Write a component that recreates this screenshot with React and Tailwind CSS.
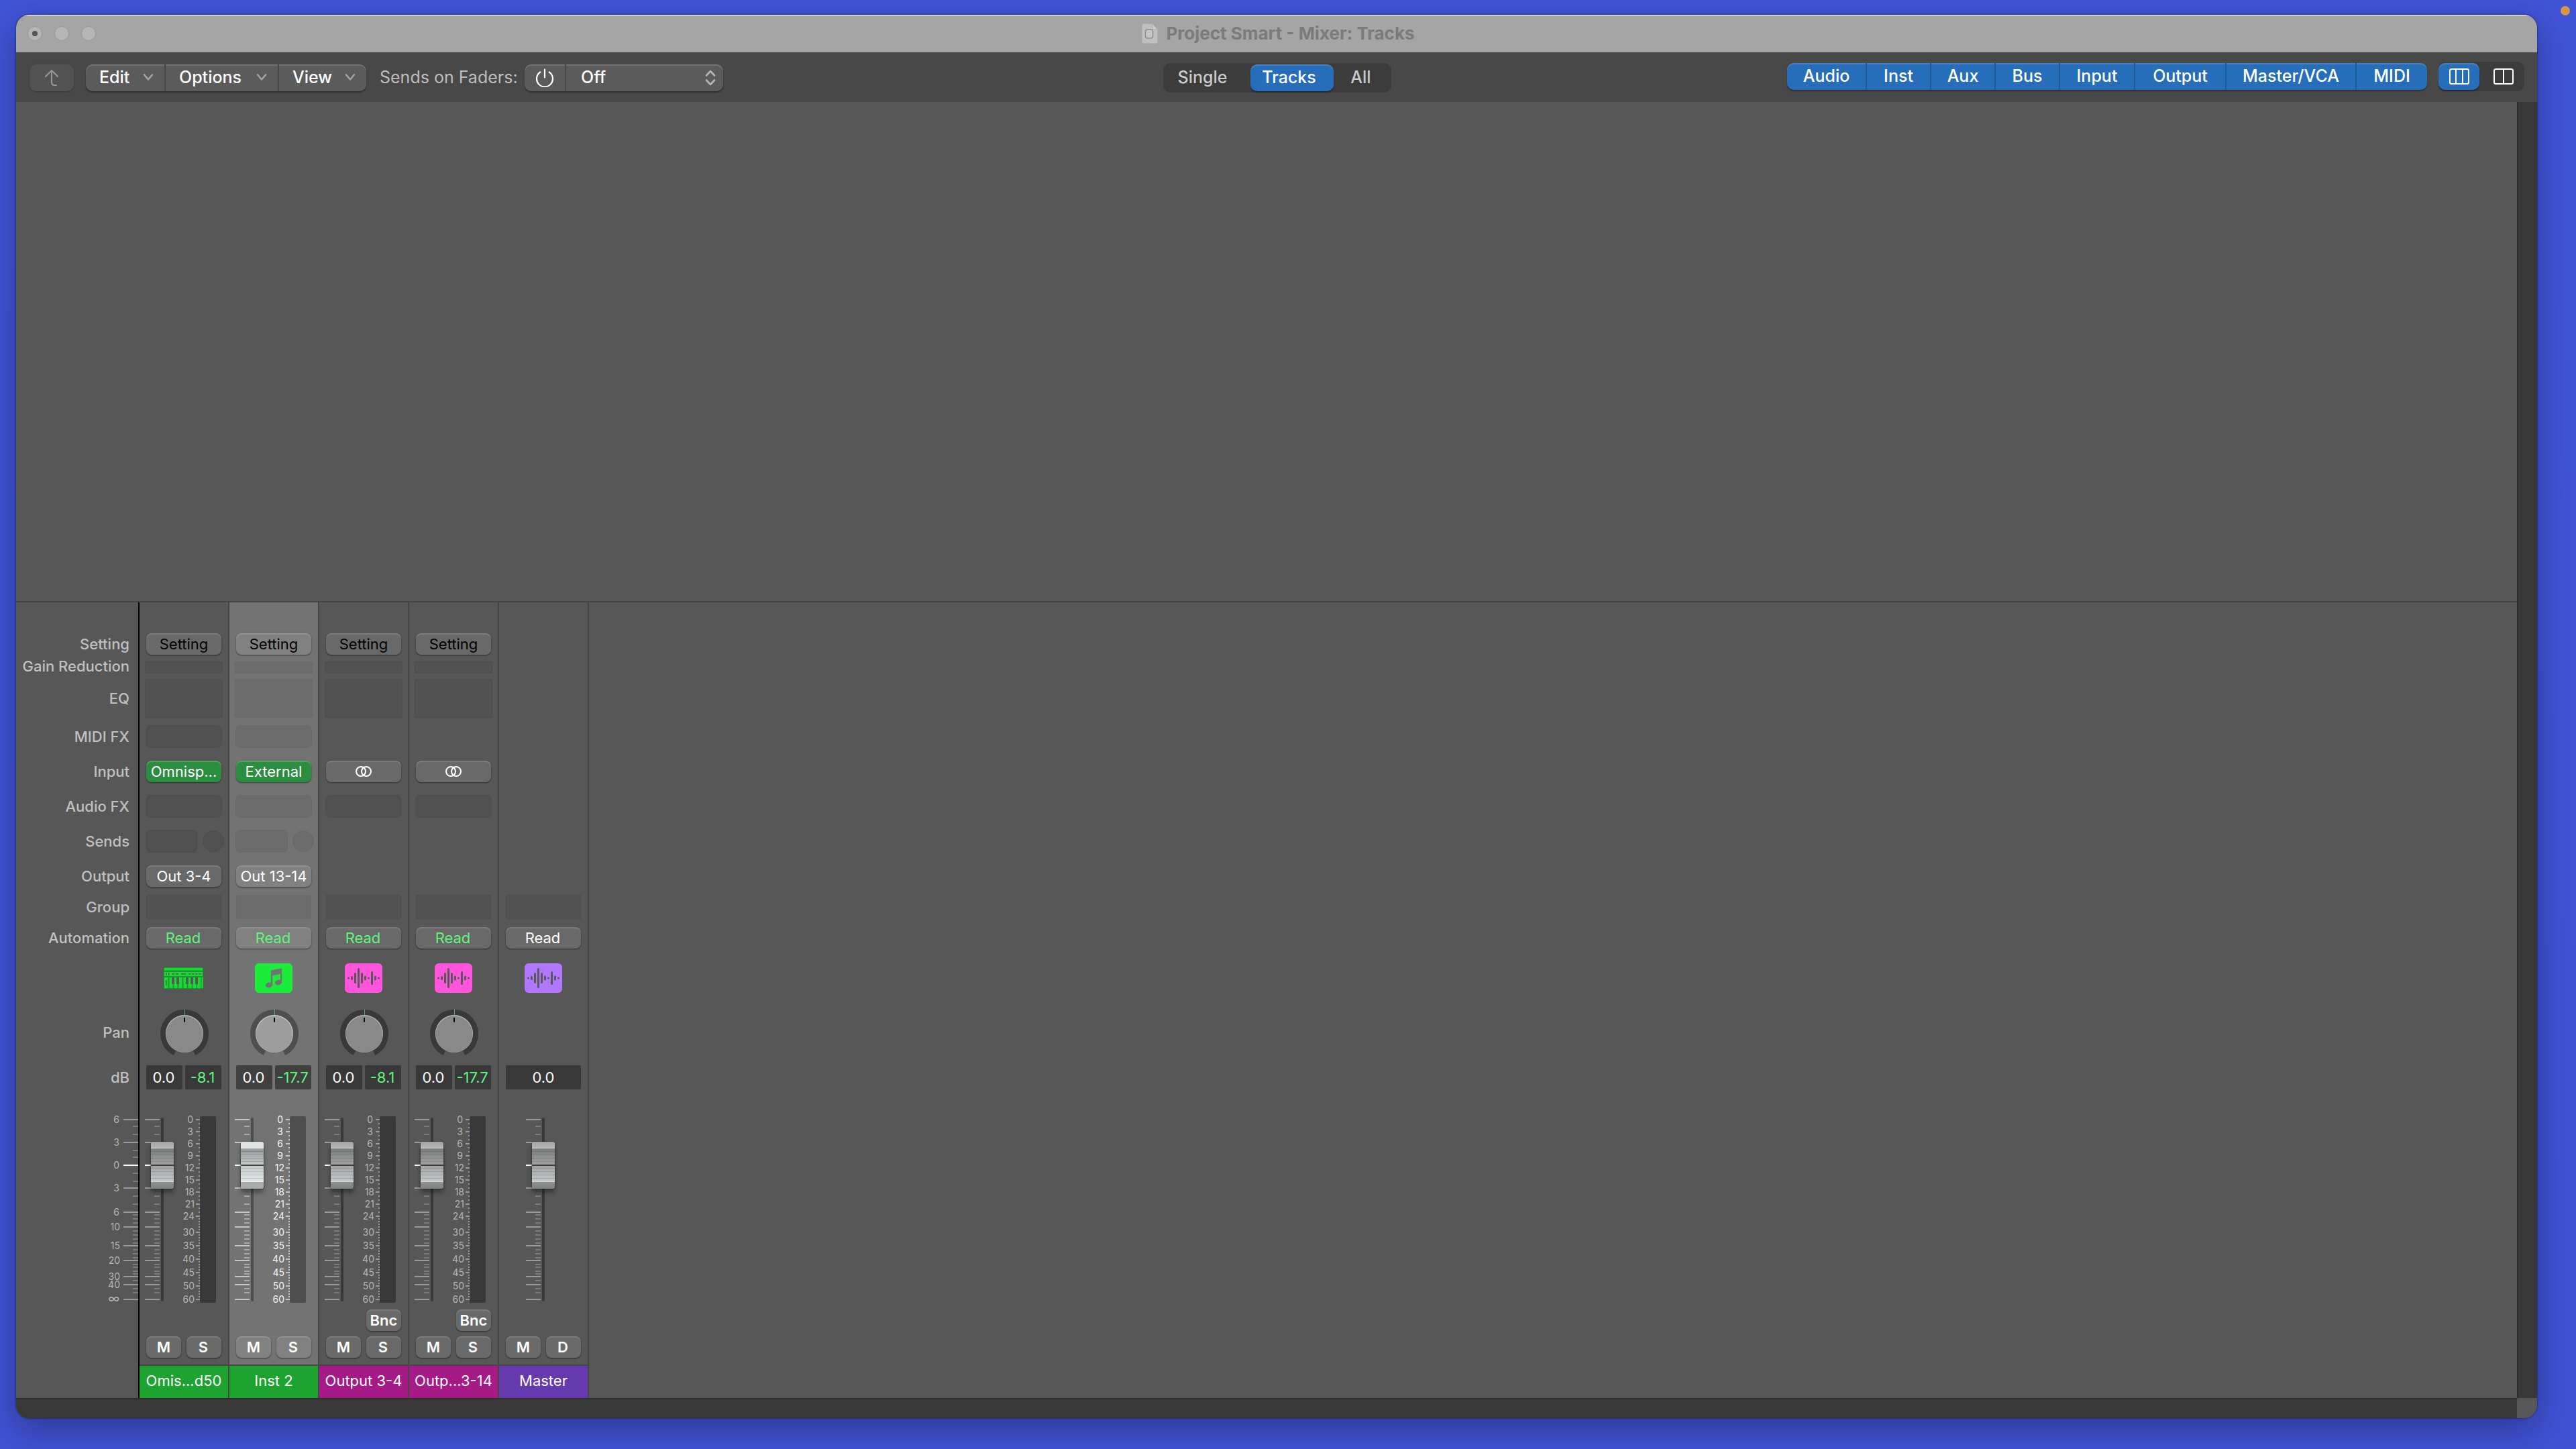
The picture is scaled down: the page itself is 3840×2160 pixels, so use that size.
import { clsx } from 'clsx';

const FILTERS = [
  { name: 'Audio', width: 'w-[119px]' },
  { name: 'Inst', width: 'w-[96px]' },
  { name: 'Aux', width: 'w-[96px]' },
  { name: 'Bus', width: 'w-[96px]' },
  { name: 'Input', width: 'w-[112px]' },
  { name: 'Output', width: 'w-[136px]' },
  { name: 'Master/VCA', width: 'w-[194px]' },
  { name: 'MIDI', width: 'w-[105px]' },
];

// one entry per row, shared by the label column and every strip
const ROW = {
  setting: 'h-[44px]',
  gain: 'h-[26px]',
  eq: 'h-[66px]',
  midi: 'h-[48px]',
  input: 'h-[56px]',
  fx: 'h-[48px]',
  sends: 'h-[56px]',
  output: 'h-[48px]',
  group: 'h-[44px]',
  auto: 'h-[48px]',
  icon: 'h-[72px]',
  pan: 'h-[94px]',
  db: 'h-[36px]',
};

const LABELS = [
  ['Setting', ROW.setting],
  ['Gain Reduction', ROW.gain, 'pb-1'],
  ['EQ', ROW.eq],
  ['MIDI FX', ROW.midi],
  ['Input', ROW.input],
  ['Audio FX', ROW.fx],
  ['Sends', ROW.sends],
  ['Output', ROW.output],
  ['Group', ROW.group],
  ['Automation', ROW.auto],
  ['', ROW.icon],
  ['Pan', ROW.pan, 'pb-1'],
  ['dB', ROW.db],
];

const STRIPS = [
  { id: 's1', name: 'Omis...d50', color: 'bg-[#1ea331]', inst: true, input: 'Omnisp...', output: 'Out 3-4', peak: '-8.1', icon: 'keys' },
  { id: 's2', name: 'Inst 2', color: 'bg-[#1ea331]', inst: true, input: 'External', output: 'Out 13-14', peak: '-17.7', icon: 'note', selected: true },
  { id: 's3', name: 'Output 3-4', color: 'bg-[#a51a86]', aux: true, peak: '-8.1', icon: 'wave', iconColor: 'bg-[#ff55dc]' },
  { id: 's4', name: 'Outp...3-14', color: 'bg-[#a51a86]', aux: true, peak: '-17.7', icon: 'wave', iconColor: 'bg-[#ff55dc]' },
  { id: 's5', name: 'Master', color: 'bg-[#6739ae]', master: true, icon: 'wave', iconColor: 'bg-[#b078ff]' },
];

// y positions are measured from the top of the 278px fader area
const MAJOR = [
  [5, '6'], [39, '3'], [73, '0'], [107, '3'], [143, '6'], [165, '10'], [193, '15'],
  [215, '20'], [239, '30'], [251, '40'], [273, '∞'],
];
const MINOR = [15, 27, 51, 61, 85, 97, 119, 131, 147, 153, 159, 171, 177, 183, 189, 199, 205, 211, 221, 225, 231, 235, 245, 257, 263];
const METER = [
  [5, 0], [23, 3], [41, 6], [59, 9], [77, 12], [95, 15], [113, 18], [131, 21], [149, 24],
  [173, 30], [193, 35], [213, 40], [233, 45], [253, 50], [273, 60],
];
const METER_MINOR = [
  ...Array.from({ length: 24 }, (_, i) => 5 + i * 6),
  ...Array.from({ length: 31 }, (_, i) => 149 + i * 4),
];

const Chevron = () => (
  <svg className="h-[12px] w-[16px]" viewBox="0 0 16 12" fill="none" stroke="#a3a3a3" strokeWidth="2.6" strokeLinecap="round" strokeLinejoin="round">
    <path d="M2 2.5 8 9.5 14 2.5" />
  </svg>
);

const raised = 'shadow-[0_2px_2px_rgba(0,0,0,0.35),inset_0_2px_1px_rgba(255,255,255,0.16)]';

const MenuButton = ({ children, className }) => (
  <button className={clsx('flex items-center justify-between border-r-2 border-[#484848] pr-4 pb-[2px] pl-5 last:border-r-0', className)}>
    {children}
    <Chevron />
  </button>
);

const TitleBar = () => (
  <header className="grid h-14 grid-cols-[1fr_auto_1fr] items-center border-t-2 border-[#cfcfcf] bg-[#a5a5a5] pb-[2px] pl-[17px]">
    <div className="flex gap-[18px]">
      <button aria-label="Close" className="flex size-[22px] items-center justify-center rounded-full border border-[#9b9b9b] bg-[#b6b6b6]">
        <span className="size-2 rounded-full bg-[#555]" />
      </button>
      <button aria-label="Minimize" className="size-[22px] rounded-full border border-[#9b9b9b] bg-[#b6b6b6]" />
      <button aria-label="Zoom" className="size-[22px] rounded-full border border-[#9b9b9b] bg-[#b6b6b6]" />
    </div>
    <div className="flex items-center gap-3 pr-3 text-[26px] leading-8 font-bold text-[#7b7b7b]">
      <svg className="h-[30px] w-[24px]" viewBox="0 0 24 30">
        <path d="M3 0.5h13l7.5 8.5v18a2.5 2.5 0 0 1-2.5 2.5H3A2.5 2.5 0 0 1 .5 27V3A2.5 2.5 0 0 1 3 .5z" fill="#c0c0c0" stroke="#b0b0b0" />
        <path d="M16 .5 23.5 9H18a2 2 0 0 1-2-2z" fill="#cdcdcd" stroke="#adadad" />
        <rect x="5.5" y="9" width="11" height="13" rx="3" fill="#c4c4c4" stroke="#8b8b8b" strokeWidth="1.5" />
        <circle cx="11" cy="15.5" r="4" fill="#b4b4b4" stroke="#d0d0d0" />
        <path d="M11 12v7M7.5 15.5h7M8.5 13l5 5M13.5 13l-5 5" stroke="#ddd" strokeWidth=".8" />
      </svg>
      <h1>Project Smart - Mixer: Tracks</h1>
    </div>
  </header>
);

const Toolbar = () => (
  <div className="grid h-[74px] grid-cols-[1fr_auto_1fr] items-center bg-[#484848] pr-[19px] pl-5 text-[25px] leading-8 font-medium text-white">
    <div className="flex items-center pt-[2px]">
      <button aria-label="Up" className="mr-[18px] flex h-10 w-[66px] items-center justify-center rounded-[10px] bg-[#525252] shadow-[0_1px_2px_rgba(0,0,0,0.25)]">
        <svg className="h-[26px] w-[22px]" viewBox="0 0 22 26" fill="none" stroke="#969696" strokeWidth="2.2" strokeLinecap="round" strokeLinejoin="round">
          <path d="M2 11 11 2l9 9M11 2v17.5q0 4.5 4.5 4.5H18" />
        </svg>
      </button>
      <div className={clsx('flex h-10 rounded-[10px] bg-[#5b5b5b]', raised)}>
        <MenuButton className="w-[119px]">Edit</MenuButton>
        <MenuButton className="w-[169px]">Options</MenuButton>
        <MenuButton className="w-[130px]">View</MenuButton>
      </div>
      <label htmlFor="sends-on-faders" className="w-[236px] pb-[2px] pl-5 font-normal whitespace-nowrap text-[#bdbdbd]">Sends on Faders:</label>
      <div className={clsx('flex h-10 rounded-[10px] bg-[#5b5b5b]', raised)}>
        <button aria-label="Sends on Faders" className="flex w-[62px] items-center justify-center border-r-2 border-[#484848]">
          <svg className="size-[28px]" viewBox="0 0 28 28" fill="none" stroke="#fff" strokeWidth="2.2" strokeLinecap="round">
            <path d="M14 1.5v12M7.3 5.5a12 12 0 1 0 13.4 0" />
          </svg>
        </button>
        <div className="relative flex">
          <select id="sends-on-faders" className="w-[234px] appearance-none bg-transparent pb-[2px] pl-[22px] outline-none">
            <option>Off</option>
          </select>
          <svg className="pointer-events-none absolute top-2 right-[11px] h-[24px] w-[16px]" viewBox="0 0 16 24" fill="none" stroke="#b5b5b5" strokeWidth="2.6" strokeLinecap="round" strokeLinejoin="round">
            <path d="M2 8.5 8 2l6 6.5M2 15.5 8 22l6-6.5" />
          </svg>
        </div>
      </div>
    </div>

    <div className="mt-[2px] flex h-11 items-center rounded-[11px] bg-[#3c3c3c] text-[#cacaca]">
      <button className="w-[130px] pr-3 pb-[2px]">Single</button>
      <button className={clsx('h-10 w-[124px] rounded-[10px] bg-[#266eb9] pr-2 pb-[2px] text-white', raised)}>Tracks</button>
      <button className="w-[86px] pr-1 pb-[2px]">All</button>
    </div>

    <div className="flex items-center justify-end gap-[17px] pb-[2px]">
      <div className={clsx('flex h-10 rounded-[10px] bg-[#266eb9]', raised)}>
        {FILTERS.map((f) => (
          <button key={f.name} className={clsx('border-r-2 border-[#1f5b9a] pb-[2px] last:border-r-0', f.width)}>{f.name}</button>
        ))}
      </div>
      <div className="flex h-11 items-center rounded-[11px] bg-[#3c3c3c]">
        <button aria-label="Narrow strips" className={clsx('flex h-10 w-[61px] items-center justify-center rounded-[10px] bg-[#266eb9]', raised)}>
          <svg className="h-[24px] w-[30px]" viewBox="0 0 30 24" fill="none" stroke="#fff" strokeWidth="2">
            <rect x="1" y="1" width="28" height="22" rx="2.5" />
            <path d="M10 1v22M20 1v22" />
          </svg>
        </button>
        <button aria-label="Wide strips" className="flex w-[67px] items-center justify-center pl-1">
          <svg className="h-[24px] w-[30px]" viewBox="0 0 30 24" fill="none" stroke="#fff" strokeWidth="2">
            <rect x="1" y="1" width="28" height="22" rx="2.5" />
            <path d="M15 1v22" />
          </svg>
        </button>
      </div>
    </div>
  </div>
);

const Row = ({ height, children }) => <div className={clsx('flex items-center justify-center', height)}>{children}</div>;

const StripButton = ({ selected, className, children, ...rest }) => (
  <button
    className={clsx(
      'flex h-8 items-center justify-center rounded-[8px] whitespace-nowrap shadow-[0_1px_2px_rgba(0,0,0,0.5),inset_0_2px_1px_rgba(255,255,255,0.14)]',
      selected ? 'bg-[#818181]' : 'bg-[#696969]',
      className
    )}
    {...rest}
  >
    {children}
  </button>
);

const Slot = ({ selected, className }) => (
  <div className={clsx('border', selected ? 'border-[#696969] bg-[#6c6c6c]' : 'border-[#4e4e4e] bg-[#515151]', className)} />
);

const KeysIcon = () => (
  <svg className="h-[32px] w-[60px]" viewBox="0 0 60 32">
    <rect width="59" height="32" rx="1.5" fill="#149c28" />
    <path fill="#1cd837" d="M1 1h57v3.5H1zM1 7h57v6H1zM1 15h5.5v16H1zM56.5 15h2v16h-2z" />
    {[8.5, 15.5, 22.5, 29.5, 36.5, 43.5, 50].map((x) => (
      <rect key={x} x={x} y="15" width="5" height="16" fill="#1cd837" />
    ))}
    {[12, 19, 33, 40, 47].map((x) => (
      <rect key={x} x={x} y="15" width="4" height="10" fill="#575757" />
    ))}
    <path fill="#575757" d="M3 8h1.5v4H3zM7 8h1.5v4H7zM12 9h4v1.5h-4zM18 9h4v1.5h-4zM26 9h7v1.5h-7zM37 9h3.5v1.5H37zM42 9h3.5v1.5H42zM47 9h3.5v1.5H47zM52 9h4v1.5h-4zM3 19h1.5v8H3z" />
  </svg>
);

const NoteIcon = () => (
  <div className="flex h-11 w-14 items-center justify-center rounded-[6px] bg-[#1bec39]">
    <svg className="h-[30px] w-[26px]" viewBox="0 0 26 30" fill="#737373">
      <ellipse cx="6" cy="25.5" rx="5.2" ry="3.8" transform="rotate(-12 6 25.5)" />
      <ellipse cx="20" cy="21.5" rx="5.2" ry="3.8" transform="rotate(-12 20 21.5)" />
      <path d="M8.8 26V4.5Q8.8 3.5 10 3.2L24 .6Q25.2.5 25.2 1.5V22h-2.4V9L11.2 11.3V26z" />
    </svg>
  </div>
);

const BARS = [[4, 3], [9, 6], [14, 16], [19, 30], [24, 16], [29, 7], [34, 3], [39, 20], [44, 7], [49, 3]];

const WaveIcon = ({ color }) => (
  <div className={clsx('h-11 w-14 rounded-[6px]', color)}>
    <svg className="h-11 w-14" viewBox="0 0 56 44">
      {BARS.map(([x, h]) => (
        <rect key={x} x={x} y={22 - h / 2} width="3" height={h} rx="1.5" fill="#575757" />
      ))}
    </svg>
  </div>
);

const PanKnob = ({ name, selected }) => (
  <label className="relative ml-[2px] block size-[72px]">
    <svg className="size-[72px]" viewBox="0 0 72 72">
      <path d="M21.5 64.5A32 32 0 1 1 50.5 64.5" fill="none" stroke={selected ? '#4e4e4e' : '#393939'} strokeWidth="8" />
      <path d="M36.5 0v8" stroke="#59a86a" />
      <circle cx="36" cy="36" r="28" fill={selected ? '#c9c9c9' : '#b5b5b5'} />
      <circle cx="36" cy="36.7" r="27.3" fill={selected ? '#9d9d9d' : '#898989'} />
      <rect x="35" y="12" width="2" height="6.5" fill="#000" />
    </svg>
    <input type="range" min="-64" max="63" defaultValue="0" aria-label={`${name} pan`} className="absolute inset-0 m-0 size-full opacity-0" />
  </label>
);

const Fader = ({ name, selected, meter }) => {
  const line = selected ? '#c6c6c6' : '#999';
  const slot = selected ? '#4e4e4e' : '#393939';
  return (
    <div className={clsx('relative h-[278px]', meter ? 'w-[116px]' : 'w-[52px]')}>
      <svg className="h-full w-full overflow-visible" style={{ fontFamily: 'Inter, sans-serif' }}>
        {MAJOR.map(([y], i) => (
          <rect key={y} x="0" y={y - 1} width="22" height="2" fill={i === 2 ? '#fff' : line} />
        ))}
        {MINOR.map((y) => <rect key={y} x="14" y={y - 1} width="8" height="2" fill={selected ? '#a9a9a9' : '#7c7c7c'} />)}
        <rect x="24" y="2" width="4" height="274" rx="2" fill={slot} />
        {meter && METER.map(([y, db]) => (
          <g key={y}>
            <text x={db < 10 ? 72 : 74} y={y + 5} textAnchor="end" fontSize="14" fill={selected ? '#f4f4f4' : '#b5b5b5'}>{db}</text>
            <rect x="76" y={y - 1} width="6" height="2" fill={line} />
          </g>
        ))}
        {meter && METER_MINOR.map((y, i) => <rect key={i} x="80" y={y - 1} width="2" height="2" fill={line} />)}
        {meter && <rect x="82" y="0" width="24" height="278" rx="2" fill={slot} />}
      </svg>
      <input
        type="range"
        min="0"
        max="208"
        defaultValue="170"
        aria-label={`${name} volume`}
        className={clsx(
          'absolute top-0 left-[9px] m-0 h-[278px] w-[34px] appearance-none bg-transparent [direction:rtl] [writing-mode:vertical-lr]',
          '[&::-webkit-slider-thumb]:h-[70px] [&::-webkit-slider-thumb]:w-[34px] [&::-webkit-slider-thumb]:appearance-none [&::-webkit-slider-thumb]:rounded-[3px] [&::-webkit-slider-thumb]:shadow-[0_6px_6px_rgba(0,0,0,0.35),0_0_2px_rgba(0,0,0,0.5)]',
          selected
            ? '[&::-webkit-slider-thumb]:[background:linear-gradient(#444,#444)_0_34px/100%_2px_no-repeat,linear-gradient(#dfe3e3_0_9px,#f0f4f4_9px_10px,transparent_10px_59px,#eef2f2_59px_60px,#a9abab_60px),repeating-linear-gradient(transparent_0_4px,#00000022_4px_5px),linear-gradient(#959999_10px,#c9cccc_36px,#e2e7e9_60px)]'
            : '[&::-webkit-slider-thumb]:[background:linear-gradient(#3a3a3a,#3a3a3a)_0_34px/100%_2px_no-repeat,linear-gradient(#a3a5a5_0px,#b4b6b6_9px,#cfd2d2_9px_10px,transparent_10px_59px,#d3d8da_59px_60px,#909292_60px,#808282_70px),repeating-linear-gradient(transparent_0_4px,#00000022_4px_5px),linear-gradient(#7b7d7d_10px,#a6a6a6_36px,#c2c8ca_60px)]'
        )}
      />
    </div>
  );
};

const Strip = ({ strip }) => {
  const { name, selected, inst, aux, master } = strip;
  return (
    <section aria-label={name} className={clsx('w-[134px] border-r-2 border-[#464646] pt-10 text-center', selected ? 'bg-[#737373]' : 'bg-[#575757]')}>
      <Row height={ROW.setting}>
        {!master && <StripButton selected={selected} className="w-28 text-black">Setting</StripButton>}
      </Row>
      <Row height={ROW.gain}>{!master && <Slot selected={selected} className="h-[18px] w-[116px] rounded-[2px]" />}</Row>
      <Row height={ROW.eq}>{!master && <Slot selected={selected} className="h-[58px] w-[116px] rounded-[2px]" />}</Row>
      <Row height={ROW.midi}>{inst && <Slot selected={selected} className="h-[34px] w-[114px] rounded-[8px]" />}</Row>
      <Row height={ROW.input}>
        {inst && (
          <button className="h-8 w-28 rounded-[8px] bg-[#2a8d3f] text-white shadow-[0_1px_2px_rgba(0,0,0,0.5),inset_0_2px_1px_rgba(255,255,255,0.2)]">{strip.input}</button>
        )}
        {aux && (
          <StripButton className="w-28" aria-label="Stereo">
            <svg className="h-[16px] w-[26px]" viewBox="0 0 26 16" fill="none" stroke="#fff" strokeWidth="2">
              <circle cx="9" cy="8" r="7" />
              <circle cx="17" cy="8" r="7" />
            </svg>
          </StripButton>
        )}
      </Row>
      <Row height={ROW.fx}>{!master && <Slot selected={selected} className="h-[34px] w-[114px] rounded-[8px]" />}</Row>
      <Row height={ROW.sends}>
        {inst && (
          <div className="flex items-center gap-[7px] pl-[3px]">
            <Slot selected={selected} className="h-[34px] w-[78px] rounded-[8px]" />
            <Slot selected={selected} className="size-8 rounded-full" />
          </div>
        )}
      </Row>
      <Row height={ROW.output}>
        {inst && <StripButton selected={selected} className="w-28 text-white">{strip.output}</StripButton>}
      </Row>
      <Row height={ROW.group}><Slot selected={selected} className="h-9 w-28 rounded-[2px]" /></Row>
      <Row height={ROW.auto}>
        <StripButton selected={selected} className={clsx('w-28 pr-[2px]', master ? 'text-white' : 'text-[#62f57e]')}>Read</StripButton>
      </Row>
      <Row height={ROW.icon}>
        {strip.icon === 'keys' && <KeysIcon />}
        {strip.icon === 'note' && <NoteIcon />}
        {strip.icon === 'wave' && <WaveIcon color={strip.iconColor} />}
      </Row>
      <Row height={ROW.pan}>{!master && <PanKnob name={name} selected={selected} />}</Row>
      <div className="flex h-9 gap-1 px-[10px]">
        <input
          aria-label={`${name} level`}
          defaultValue="0.0"
          className={clsx('min-w-0 flex-1 rounded-[2px] text-center text-white', !master && 'pr-[2px]', selected ? 'bg-[#404040]' : 'bg-[#383838]')}
        />
        {!master && (
          <output className={clsx('flex min-w-0 flex-1 items-center justify-center rounded-[2px] pr-[2px] text-[#62f57e]', selected ? 'bg-[#404040]' : 'bg-[#383838]')}>{strip.peak}</output>
        )}
      </div>
      <div className="mt-10 flex justify-center">
        <Fader name={name} selected={selected} meter={!master} />
      </div>
      <div className="mt-[10px] grid grid-cols-2 gap-2 px-[10px] pb-[10px] text-white">
        <div className="col-start-2 h-8">
          {aux && <StripButton className="w-full font-semibold">Bnc</StripButton>}
        </div>
        <StripButton selected={selected} className="font-semibold">M</StripButton>
        <StripButton selected={selected} className="pr-[2px] font-semibold">{master ? 'D' : 'S'}</StripButton>
      </div>
      <h2 className={clsx('flex h-[50px] items-center justify-center border-t-2 border-[#464646] pb-1 whitespace-nowrap text-white', strip.color)}>{name}</h2>
    </section>
  );
};

const LabelColumn = () => (
  <div className="w-[184px] border-r-2 border-black pt-10 text-right text-[#c0c0c0]">
    {LABELS.map(([text, height, pad], i) => (
      <div key={i} className={clsx('flex items-center justify-end pr-[13px] font-medium', height, pad)}>{text}</div>
    ))}
    <svg className="mt-10 ml-auto h-[278px] w-[60px] overflow-visible" style={{ fontFamily: 'Inter, sans-serif' }}>
      {MAJOR.map(([y, text], i) => (
        <g key={y}>
          <text x={text.length > 1 ? 33 : 32} y={y + 5} textAnchor="end" fontSize={text === '∞' ? 18 : 14} fill="#b5b5b5">{text}</text>
          <rect x="38" y={y - 1} width="22" height="2" fill={i === 2 ? '#fff' : '#999'} />
        </g>
      ))}
      {MINOR.map((y) => <rect key={y} x="52" y={y - 1} width="8" height="2" fill="#7c7c7c" />)}
    </svg>
  </div>
);

export default function App() {
  return (
    <div className="relative flex min-h-screen bg-[linear-gradient(#4054d6,#3f52d3)] pt-[22px] pr-[58px] pb-[46px] pl-6 font-['Inter',sans-serif]">
      <span className="absolute top-[9px] right-[9px] size-[14px] rounded-full bg-[#dc9448]" />
      <main className="flex flex-1 flex-col overflow-hidden rounded-[20px] bg-[#575757] shadow-[0_16px_50px_rgba(0,0,0,0.3),0_0_3px_rgba(0,0,0,0.6)]">
        <TitleBar />
        <Toolbar />
        <div className="flex flex-1">
          <div className="flex flex-1 flex-col">
            <div className="flex-1" />
            <div className="flex border-t-2 border-[#464646] text-[22px] leading-7">
              <LabelColumn />
              {STRIPS.map((s) => <Strip key={s.id} strip={s} />)}
            </div>
          </div>
          <div className="w-[30px] border-l-2 border-[#2d2d2d] bg-[#383838]" />
        </div>
        <div className="flex h-[30px]">
          <div className="flex-1 border-t-2 border-[#2d2d2d] bg-[#383838]" />
          <div className="w-[30px] bg-[#575757]" />
        </div>
      </main>
    </div>
  );
}
